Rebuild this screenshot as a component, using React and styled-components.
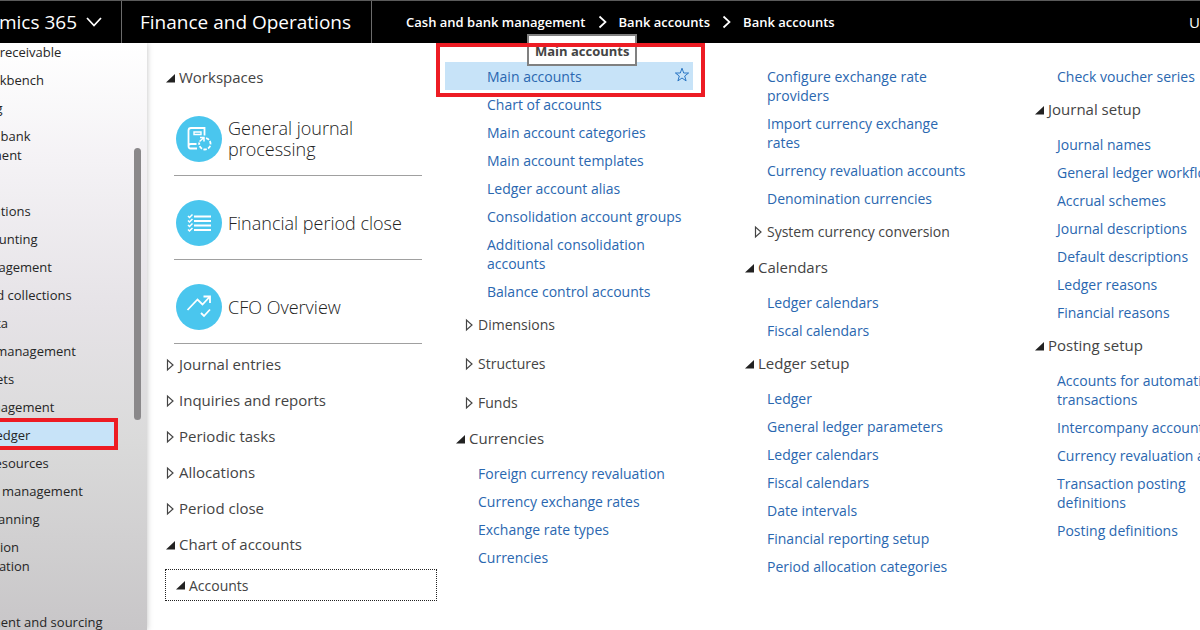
import React from 'react';
import styled, { createGlobalStyle } from 'styled-components';

const GlobalStyle = createGlobalStyle`
	* {
		box-sizing: border-box;
	}

	body {
		margin: 0;
		background-color: #fff;
		font-family: 'Open Sans', 'Noto Sans', sans-serif;
		font-size: 13px;
		line-height: 19px;
	}

	button {
		font: inherit;
		color: inherit;
		background: none;
		border: none;
		padding: 0;
		text-align: left;
	}

	a {
		color: inherit;
		text-decoration: none;
	}

	ul {
		list-style-type: none;
		margin: 0;
		padding: 0;
	}

	svg {
		flex: none;
	}
`;

const Shell = styled.div`
	display: flex;
	flex-direction: column;
	height: 100vh;
	overflow: hidden;
`;

const Header = styled.header`
	display: flex;
	flex: none;
	height: 43px;
	color: #fff;
	background-color: #000;
	border-top: 1px solid #5a5a5a;
	overflow: hidden;
	white-space: nowrap;
`;

const Brand = styled.button`
	display: flex;
	flex: none;
	justify-content: flex-end;
	align-items: center;
	gap: 8px;
	width: 121px;
	padding-right: 18px;
	font-size: 19px;
	overflow: hidden;
`;

const ProductName = styled.a`
	display: flex;
	align-items: center;
	padding: 0 20px 0 18px;
	font-size: 19px;
	border: 1px solid #6b6b6b;
	border-width: 0 1px;
`;

const Breadcrumb = styled.nav`
	display: flex;
	align-items: center;
	gap: 12px;
	margin-left: 34px;
	font-weight: 600;
`;

const Company = styled.button`
	margin-left: auto;
	margin-right: -34px;
	width: 45px;
	font-size: 15px;
`;

const Body = styled.div`
	display: flex;
	flex: 1;
	min-height: 0;
`;

const Sidebar = styled.nav`
	position: relative;
	flex: 0 0 147px;
	color: #262626;
	background: linear-gradient(#fff, #f4f2f5 20%, #e6e3e7 45%, #dadada 68%, #c8c6c8);
	box-shadow: 0 0 6px rgb(0, 0, 0, 0.25);
	overflow: hidden;

	/* the list is scrolled sideways and a little way down */
	ul {
		margin: -5px 32px 0 -59px;
	}
`;

const Module = styled.li`
	position: relative;
	white-space: pre-line;

	a {
		display: block;
		padding: 5px 0 4px;
		background-color: ${({ $selected }) => ($selected ? '#c7e3f8' : 'transparent')};
	}
`;

const ScrollThumb = styled.div`
	position: absolute;
	top: 105px;
	right: 6px;
	width: 7px;
	height: 272px;
	border-radius: 4px;
	background-color: #8a888a;
`;

const Callout = styled.div`
	position: absolute;
	inset: ${({ $inset }) => $inset};
	border: 4px solid #ed1c24;
	pointer-events: none;
`;

const Panel = styled.main`
	display: grid;
	flex: 1;
	grid-template-columns: 290px 289px repeat(2, 290px);
	align-items: start;
	min-width: 0;
	padding: 17px 0 0 8px;
`;

const Group = styled.button`
	display: flex;
	align-items: center;
	gap: 3px;
	width: 100%;
	height: 36px;
	padding-left: ${({ $level }) => ($level === 2 ? 19 : 10)}px;
	padding-bottom: 1px;
	font-size: ${({ $level }) => ($level === 2 ? 14 : 15)}px;
	color: #444;
`;

const SubGroups = styled.div`
	display: grid;
	gap: 3px;
`;

const Links = styled.ul`
	padding: 2px 0;
	margin-right: 41px;
	font-size: 14px;
	color: #2a67b0;
	white-space: pre-line;
`;

const LinkRow = styled.li`
	position: relative;
	display: flex;
	align-items: flex-start;
	padding: 5px 10px 4px ${({ $level }) => ($level === 2 ? 42 : 33)}px;

	a {
		flex: 1;
	}
`;

const ActiveRow = styled(LinkRow)`
	background-color: #c7e3f8;
	padding-right: 3px;
`;

const Tooltip = styled.div`
	position: absolute;
	top: -28px;
	left: 82px;
	padding: 6px 6px 3px;
	font-size: 13px;
	font-weight: 700;
	color: #444;
	background-color: #fff;
	border: 2px solid #808080;
	white-space: nowrap;
`;

const Tiles = styled.div`
	display: grid;
	gap: 4px;
	margin: 0 23px 3px 19px;
`;

const Tile = styled.a`
	display: flex;
	align-items: center;
	gap: 6px;
	padding: 20px 0 13px 2px;
	font-size: 18px;
	font-weight: 300;
	line-height: 21px;
	color: #222;
	border-bottom: 1px solid #a0a0a0;
`;

const FocusedGroup = styled.div`
	margin: 6px 8px 0 10px;
	border: 1px dotted #222;

	button {
		height: 30px;
		padding: 0 0 0 9px;
	}
`;

const modules = [
	'Accounts receivable',
	'Audit workbench',
	'Budgeting',
	'Cash and bank\nmanagement',
	'Common',
	'Consolidations',
	'Cost accounting',
	'Cost management',
	'Credit and collections',
	'Demo data',
	'Expense management',
	'Fixed assets',
	'Fleet management',
	'General ledger',
	'Human resources',
	'Inventory management',
	'Master planning',
	'Organization\nadministration',
	'Payroll',
	'Procurement and sourcing',
];

const accountLinks = [
	'Chart of accounts',
	'Main account categories',
	'Main account templates',
	'Ledger account alias',
	'Consolidation account groups',
	'Additional consolidation accounts',
	'Balance control accounts',
];

function Arrow({ open }) {
	return (
		<svg width='11' height='14' viewBox='0 0 11 14'>
			{open ? (
				<path d='M1 11.5H10V3Z' fill='#222' />
			) : (
				<path d='M2.5 2V12L8 7Z' fill='none' stroke='#444' strokeWidth='1.2' />
			)}
		</svg>
	);
}

function Chevron({ down }) {
	return down ? (
		<svg width='18' height='12' viewBox='0 0 18 12'>
			<path d='M2 2L9 9.5L16 2' fill='none' stroke='#fff' strokeWidth='1.7' />
		</svg>
	) : (
		<svg width='9' height='14' viewBox='0 0 9 14'>
			<path d='M1.5 1.5L7.5 7L1.5 12.5' fill='none' stroke='#fff' strokeWidth='1.7' />
		</svg>
	);
}

function TileIcon({ children }) {
	return (
		<svg width='46' height='46' viewBox='0 0 46 46' fill='none' stroke='#fff' strokeWidth='1.8'>
			<circle cx='23' cy='23' r='23' fill='#4ac6ee' stroke='none' />
			{children}
		</svg>
	);
}

function TreeGroup({ label, open, level = 1 }) {
	return (
		<Group $level={level} aria-expanded={!!open}>
			<Arrow open={open} />
			{label}
		</Group>
	);
}

function LinkItems({ items, level = 1 }) {
	return items.map((item) => (
		<LinkRow key={item} $level={level}>
			<a href='#'>{item}</a>
		</LinkRow>
	));
}

function LinkList({ items }) {
	return (
		<Links>
			<LinkItems items={items} />
		</Links>
	);
}

function App() {
	return (
		<Shell>
			<GlobalStyle />
			<Header>
				<Brand>
					Dynamics 365
					<Chevron down />
				</Brand>
				<ProductName href='#'>Finance and Operations</ProductName>
				<Breadcrumb>
					<a href='#'>Cash and bank management</a>
					<Chevron />
					<a href='#'>Bank accounts</a>
					<Chevron />
					<a href='#'>Bank accounts</a>
				</Breadcrumb>
				<Company>USMF</Company>
			</Header>
			<Body>
				<Sidebar>
					<ul>
						{modules.map((name) => (
							<Module key={name} $selected={name === 'General ledger'}>
								<a href='#'>{name}</a>
								{name === 'General ledger' && <Callout $inset='-3px -3px -1px 0' />}
							</Module>
						))}
					</ul>
					<ScrollThumb />
				</Sidebar>
				<Panel>
					<section>
						<TreeGroup label='Workspaces' open />
						<Tiles>
							<Tile href='#'>
								<TileIcon>
									<path d='M21 32.5H14.5Q12.5 32.5 12.5 30V14.5Q12.5 12 15 12H28.5V19.5M12.5 30Q12.5 28 15 28H20.5M12.5 14V30' />
									<path d='M18 16H25V18.5H18Z' strokeWidth='1.4' />
									<path d='M30 22.2A5.7 5.7 0 1 1 23.3 26.5' strokeDasharray='3.4 1.4' />
									<path d='M23.5 25.5L28 21.5M24 21.5H28V25.5' strokeWidth='1.5' />
								</TileIcon>
								General journal processing
							</Tile>
							<Tile href='#'>
								<TileIcon>
									<path d='M18 16.5H35M18 21H35M18 25.5H35M18 30H35' />
									<path
										d='M12 16L13.5 17.5L16.5 14.5M12 20.5L13.5 22L16.5 19M12 25L13.5 26.5L16.5 23.5M12 29.5L13.5 31L16.5 28'
										strokeWidth='1.5'
									/>
								</TileIcon>
								Financial period close
							</Tile>
							<Tile href='#'>
								<TileIcon>
									<path d='M11.5 26L21.5 15.5L26.5 20.5L33.5 13M27.5 12.5H34V19' />
									<path d='M25 29L28 32L34 25.5' />
								</TileIcon>
								CFO Overview
							</Tile>
						</Tiles>
						<TreeGroup label='Journal entries' />
						<TreeGroup label='Inquiries and reports' />
						<TreeGroup label='Periodic tasks' />
						<TreeGroup label='Allocations' />
						<TreeGroup label='Period close' />
						<TreeGroup label='Chart of accounts' open />
						<FocusedGroup>
							<TreeGroup label='Accounts' level={2} open />
						</FocusedGroup>
					</section>
					<section>
						<Links>
							<ActiveRow $level={2}>
								<a href='#'>Main accounts</a>
								<svg width='16' height='16' viewBox='0 0 16 16'>
									<path
										d='M8 1.2L9.7 6H14.6L10.7 9L12.1 13.9L8 11L3.9 13.9L5.3 9L1.4 6H6.3Z'
										fill='none'
										stroke='#2a76c4'
									/>
								</svg>
								<Tooltip role='tooltip'>Main accounts</Tooltip>
								<Callout $inset='-19px -12px -7px -9px' />
							</ActiveRow>
							<LinkItems items={accountLinks} level={2} />
						</Links>
						<SubGroups>
							<TreeGroup label='Dimensions' level={2} />
							<TreeGroup label='Structures' level={2} />
							<TreeGroup label='Funds' level={2} />
						</SubGroups>
						<TreeGroup label='Currencies' open />
						<LinkList
							items={[
								'Foreign currency revaluation',
								'Currency exchange rates',
								'Exchange rate types',
								'Currencies',
							]}
						/>
					</section>
					<section>
						<LinkList
							items={[
								'Configure exchange rate providers',
								'Import currency exchange\nrates',
								'Currency revaluation accounts',
								'Denomination currencies',
							]}
						/>
						<TreeGroup label='System currency conversion' level={2} />
						<TreeGroup label='Calendars' open />
						<LinkList items={['Ledger calendars', 'Fiscal calendars']} />
						<TreeGroup label='Ledger setup' open />
						<LinkList
							items={[
								'Ledger',
								'General ledger parameters',
								'Ledger calendars',
								'Fiscal calendars',
								'Date intervals',
								'Financial reporting setup',
								'Period allocation categories',
							]}
						/>
					</section>
					<section>
						<LinkList items={['Check voucher series']} />
						<TreeGroup label='Journal setup' open />
						<LinkList
							items={[
								'Journal names',
								'General ledger workflows',
								'Accrual schemes',
								'Journal descriptions',
								'Default descriptions',
								'Ledger reasons',
								'Financial reasons',
							]}
						/>
						<TreeGroup label='Posting setup' open />
						<LinkList
							items={[
								'Accounts for automatic transactions',
								'Intercompany accounting',
								'Currency revaluation accounts',
								'Transaction posting\ndefinitions',
								'Posting definitions',
							]}
						/>
					</section>
				</Panel>
			</Body>
		</Shell>
	);
}

export default App;
